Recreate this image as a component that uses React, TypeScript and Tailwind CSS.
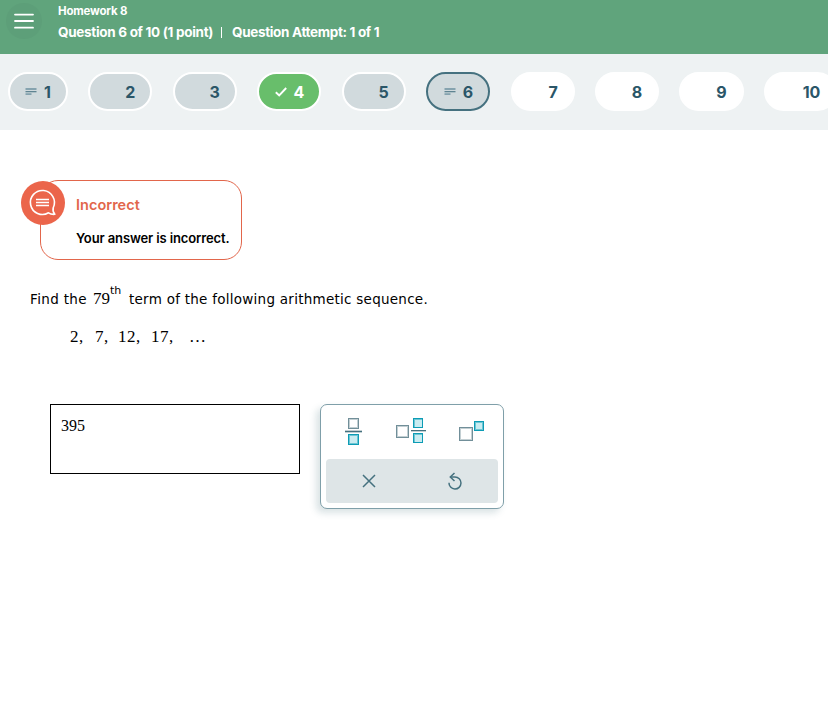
import { clsx } from 'clsx';

type QuestionStatus = 'saved' | 'skipped' | 'correct' | 'current' | 'open';

interface Question {
  id: number;
  status: QuestionStatus;
}

const QUESTIONS: Question[] = [
  { id: 1, status: 'saved' },
  { id: 2, status: 'skipped' },
  { id: 3, status: 'skipped' },
  { id: 4, status: 'correct' },
  { id: 5, status: 'skipped' },
  { id: 6, status: 'current' },
  { id: 7, status: 'open' },
  { id: 8, status: 'open' },
  { id: 9, status: 'open' },
  { id: 10, status: 'open' },
];

function LinesIcon() {
  return (
    <svg className="mt-px" width="12" height="8" viewBox="0 0 12 8" fill="#86A3AF" aria-hidden="true">
      <rect x="0.5" y="0" width="11" height="2" />
      <rect x="0.5" y="3" width="11" height="1.3" fill="#5F8492" />
      <rect x="0.5" y="5.2" width="6" height="1.8" />
    </svg>
  );
}

function CheckIcon() {
  return (
    <svg className="mt-px" width="12" height="10" viewBox="0 0 12 10" fill="none" stroke="#fff" strokeWidth="1.9" aria-hidden="true">
      <path d="M0.8 5.2 4.2 8.5 11.2 1" />
    </svg>
  );
}

function QuestionPill({ id, status }: Question) {
  return (
    <button
      type="button"
      className={clsx(
        'h-[39px] shrink-0 rounded-full border-2 flex items-center justify-end text-base font-bold leading-none pr-[15.2px]',
        id === 1 && 'w-[60.5px]',
        id === 10 && 'w-[73px]',
        id !== 1 && id !== 10 && 'w-[64.4px]',
        status === 'current' && 'border-[#45717F] bg-[#D1DADD] text-[#2B5668]',
        status === 'correct' && 'border-white bg-[#68BE6B] text-white',
        status === 'open' && 'border-white bg-white text-[#2B5668]',
        (status === 'saved' || status === 'skipped') && 'border-white bg-[#D1DADD] text-[#2B5668]'
      )}>
      {(status === 'saved' || status === 'current') && <LinesIcon />}
      {status === 'correct' && <CheckIcon />}
      <span className={clsx('pt-px text-right', id === 1 ? 'w-[13.5px]' : 'w-[17px]', id === 10 && 'tracking-[-0.3px]')}>
        {id}
      </span>
    </button>
  );
}

function Header() {
  return (
    <header className="h-[54px] bg-[#60A47C] text-white flex">
      <button
        type="button"
        aria-label="Menu"
        className="mt-[3px] ml-[6px] w-9 h-9 rounded-full bg-[#5D9F79] flex items-center justify-center">
        <svg width="20" height="16" viewBox="0 0 20 16" stroke="#fff" strokeWidth="1.8" strokeLinecap="round">
          <path d="M1 1.6h18M1 8h18M1 14.7h18" />
        </svg>
      </button>
      <div className="ml-4 pt-1 font-bold whitespace-nowrap">
        <div className="text-[11.5px] leading-[14px] tracking-[-0.2px]">Homework 8</div>
        <div className="mt-[5px] flex text-[13.5px] leading-[18px] tracking-[-0.3px]">
          <span className="w-[163px]">Question 6 of 10 (1 point)</span>
          <span className="w-[11px] flex items-center">
            <span className="w-px h-[11px] bg-white" />
          </span>
          <span className="tracking-[-0.33px]">Question Attempt: 1 of 1</span>
        </div>
      </div>
    </header>
  );
}

function Feedback() {
  return (
    <section className="relative ml-10 w-[202px] h-20 rounded-[18px] border border-[#E2664B] pl-[35px] pt-[15px] whitespace-nowrap">
      <svg className="absolute -left-5 top-0" width="44" height="44" viewBox="0 0 44 44" fill="none" aria-hidden="true">
        <circle cx="22" cy="22" r="22" fill="#EB654B" />
        <path
          d="M33.8 33.3c-2.3.2-4.6-.3-6.3-1.5A12 12 0 1 1 32.3 26.5c-.8 2.7-.1 4.8 1.5 6.8Z"
          stroke="#fff"
          strokeWidth="1.6"
          strokeLinejoin="round"
        />
        <path d="M15 18.5h13M15 21.5h13M15 24.5h13" stroke="#fff" strokeWidth="1.3" />
      </svg>
      <h2 className="text-[14.5px] leading-[18px] font-semibold tracking-[0.02px] text-[#E2664B]">Incorrect</h2>
      <p className="mt-[15px] text-[13px] leading-[18px] font-semibold tracking-[-0.12px] text-black">
        Your answer is incorrect.
      </p>
    </section>
  );
}

function MathPad() {
  return (
    <div className="w-[184px] h-[105px] rounded-[7px] border border-[#7F9FA9] bg-white px-[5px] shadow-[-4px_4px_7px_rgba(69,113,127,0.2)]">
      <svg width="172" height="54" viewBox="0 0 172 54" fill="none" shapeRendering="crispEdges">
        {/* soft inner edges */}
        <g stroke="#C3CFD3">
          <rect x="23.5" y="14.5" width="8" height="8" />
          <rect x="71.5" y="21.5" width="10" height="10" />
          <rect x="134.5" y="23.5" width="11" height="11" />
          <path d="M19 25.5h17M19 27.5h17M85 26.5h15" />
        </g>
        <g stroke="#718F99">
          <rect x="22.5" y="13.5" width="10" height="10" />
          <rect x="70.5" y="20.5" width="12" height="12" />
          <rect x="133.5" y="22.5" width="13" height="13" />
        </g>
        <g fill="#C9ECF1" stroke="#6CC5D4">
          <rect x="23.5" y="30.5" width="8" height="8" />
          <rect x="88.5" y="14.5" width="8" height="8" />
          <rect x="88.5" y="29.5" width="8" height="8" />
          <rect x="149.5" y="17.5" width="7" height="7" />
        </g>
        <g stroke="#0D9CB5">
          <rect x="22.5" y="29.5" width="10" height="10" />
          <rect x="87.5" y="13.5" width="9" height="9" />
          <rect x="87.5" y="28.5" width="9" height="9" />
          <rect x="148.5" y="16.5" width="9" height="9" />
        </g>
        <path d="M19 26.5h17M85 25.5h15" stroke="#45717F" />
      </svg>
      <div className="h-11 rounded-[4px] bg-[#DEE5E7] flex">
        <button type="button" aria-label="Clear" className="flex-1 flex items-center justify-center">
          <svg width="14" height="14" viewBox="0 0 14 14" stroke="#45717F" strokeWidth="1.5">
            <path d="M1 1l12 12M13 1 1 13" />
          </svg>
        </button>
        <button type="button" aria-label="Undo" className="flex-1 flex items-center justify-center">
          <svg width="14" height="18" viewBox="0 0 14 18" fill="none" stroke="#45717F" strokeWidth="1.5">
            <path d="M1 10.7A6 6 0 1 0 7 5H2.2" />
            <path d="M6.5 1 2.3 5l4.2 4" />
          </svg>
        </button>
      </div>
    </div>
  );
}

export default function App() {
  return (
    <div className="w-full h-screen overflow-hidden bg-white font-['Inter',sans-serif]">
      <Header />
      <nav className="h-[76px] bg-[#EEF2F3] pt-[18px] pl-[7.5px] flex gap-[20.1px] overflow-hidden">
        {QUESTIONS.map((q) => (
          <QuestionPill key={q.id} {...q} />
        ))}
      </nav>
      <main className="pt-[50px]">
        <Feedback />
        <div className="mt-[26px] pl-[30px] font-['DejaVu_Sans',sans-serif] text-[13.5px] leading-[26px] text-black whitespace-nowrap flex">
          <span className="w-[63px] tracking-[0.35px]">Find the</span>
          <span className="w-[36px] font-['Liberation_Serif',serif] text-[17px]">
            79
            <sup className="font-['DejaVu_Sans',sans-serif] text-[11px] top-[-0.9em]">th</sup>
          </span>
          <span className="tracking-[0.26px]">term of the following arithmetic sequence.</span>
        </div>
        <div className="mt-3 pl-[70px] flex font-['Liberation_Serif',serif] text-[17px] leading-[26px] text-black">
          <span className="w-[25px] tracking-[0.5px]">2,</span>
          <span className="w-[23px] tracking-[0.5px]">7,</span>
          <span className="w-[33px] tracking-[0.5px]">12,</span>
          <span className="w-[38px] tracking-[0.5px]">17,</span>
          <span>…</span>
        </div>
        <div className="mt-[54px] pl-[50px] flex items-start gap-5">
          <div className="w-[250px] h-[70px] border border-black pl-[10px] pt-[10px] font-['Liberation_Serif',serif] text-[16px] leading-[22px] text-black">
            395
          </div>
          <MathPad />
        </div>
      </main>
    </div>
  );
}
